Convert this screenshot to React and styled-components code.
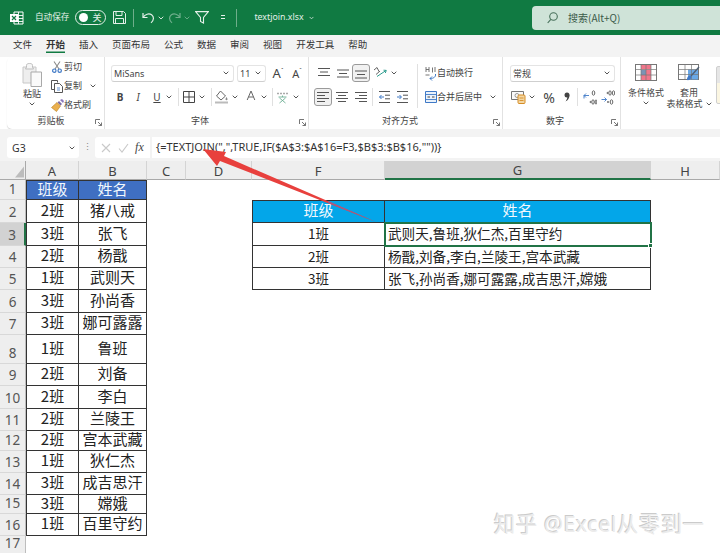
import React from 'react';
import styled, { createGlobalStyle } from 'styled-components';

const CJK = '"Noto Sans CJK SC", "Noto Sans", sans-serif';
const LAT = '"Noto Sans", "Noto Sans CJK SC", sans-serif';

const Global = createGlobalStyle`
  html, body { margin: 0; padding: 0; width: 720px; height: 553px; overflow: hidden; background: #fff; }
  * { box-sizing: border-box; }
`;

const Page = styled.div`
  position: relative; width: 720px; height: 553px; overflow: hidden;
  font-family: ${CJK}; color: #333; background: #fff;
`;

/* ---------- title bar ---------- */
const TitleBar = styled.header`
  height: 35px; background: #107a42; color: #e4f0e9; display: flex; align-items: center; padding-left: 10px;
`;
const TitleItem = styled.div`
  display: flex; align-items: center; flex: none; margin-left: ${p => p.$ml || 0}px;
  font-size: ${p => p.$fs || 9}px; line-height: 12px; white-space: nowrap; opacity: ${p => p.$dim ? .45 : 1};
  padding-bottom: ${p => p.$pb || 0}px;
`;
const FileName = styled(TitleItem)` font-family: ${LAT}; `;
const Toggle = styled.div`
  width: 31px; height: 15px; border: 1px solid #e4f0e9; border-radius: 8px; position: relative;
  display: flex; align-items: center; justify-content: flex-end; padding-right: 4px; font-size: 9px; line-height: 10px;
  &::before { content: ''; position: absolute; left: 3px; top: 2px; width: 9px; height: 9px; border-radius: 50%; background: #fff; }
`;
const TitleDivider = styled.div`
  width: 1px; height: 18px; background: #6fae8b; flex: none; margin-left: ${p => p.$ml}px;
`;
const SearchBox = styled.div`
  margin-left: auto; width: 188px; height: 24px; background: #cfe3d8; border-radius: 4px 0 0 4px;
  display: flex; align-items: center; gap: 10px; padding-left: 15px; font-size: 10px; color: #3b5a49;
`;

/* ---------- tabs ---------- */
const Tabs = styled.nav`
  height: 22px; background: #f3f3f3; display: flex; align-items: flex-start; padding: 2px 0 0 13px; gap: 14px;
`;
const Tab = styled.div`
  font-size: 9.5px; line-height: 14px; height: 16px; white-space: nowrap; color: #333;
  font-weight: ${p => p.$on ? 700 : 400};
  box-shadow: ${p => p.$on ? 'inset 0 -1.5px 0 #107a42' : 'none'};
`;

/* ---------- ribbon ---------- */
const Ribbon = styled.section`
  margin-left: 7px; height: 72px; background: #fff; border-radius: 5px 0 0 5px; display: flex; overflow: hidden;
  box-shadow: 0 1px 1px #d5d5d5;
`;
const Group = styled.div`
  position: relative; flex: none; width: ${p => p.$w}px; display: flex; flex-direction: column;
  box-shadow: ${p => p.$last ? 'none' : 'inset -1px 0 0 #e2e2e2'};
`;
const GroupBody = styled.div`
  height: 57px; display: flex; padding: 7px 0 0 ${p => p.$pl || 0}px;
`;
const GroupLabel = styled.div`
  height: 15px; font-size: 9px; line-height: 13px; text-align: center; color: #444; padding-right: ${p => p.$pr || 0}px;
`;
const Launcher = styled.svg`
  position: absolute; right: 3px; bottom: 3px; width: 7px; height: 7px;
`;
const BigButton = styled.div`
  width: ${p => p.$w}px; flex: none; display: flex; flex-direction: column; align-items: center;
  font-size: 9px; line-height: 11px; color: #444; margin-left: ${p => p.$ml || 0}px; text-align: center; white-space: nowrap;
`;
const BigIcon = styled.div`
  height: ${p => p.$h || 23}px; display: flex; align-items: flex-start; justify-content: center;
  margin-top: ${p => p.$mt || 0}px;
`;
const BigText = styled.div`
  height: 11px; display: flex; align-items: center; gap: 3px;
`;
const CaretLine = styled.div`
  margin-top: ${p => p.$mt || 3}px; line-height: 4px; display: flex;
`;
const Stack = styled.div`
  display: flex; flex-direction: column; gap: ${p => p.$gap ?? 6}px; margin-left: ${p => p.$ml || 0}px; margin-top: ${p => p.$mt || 0}px; flex: none;
`;
const Row = styled.div`
  display: flex; align-items: center; height: ${p => p.$h || 18}px; font-size: 9px; color: #444; white-space: nowrap;
`;
const Slot = styled.div`
  width: ${p => p.$w}px; flex: none; height: ${p => p.$h || 18}px; display: flex; align-items: center; justify-content: center;
  font-family: ${LAT}; font-size: ${p => p.$fs || 10}px; color: #444;
  font-weight: ${p => p.$b ? 700 : 400}; font-style: ${p => p.$i ? 'italic' : 'normal'};
  text-decoration: ${p => p.$u ? 'underline' : 'none'};
  ${p => p.$on ? 'border: 1px solid #9a9a9a; border-radius: 3px; background: #f1f1f1;' : ''}
`;
const Sep = styled.div`
  width: 1px; height: ${p => p.$h || 18}px; background: #e0e0e0; flex: none; margin: 0 ${p => p.$m || 4}px;
`;
const Select = styled.div`
  width: ${p => p.$w}px; height: 17px; flex: none; background: #fff; border: 1px solid #e4e4e4; border-bottom-color: #cfcfcf; border-radius: 3px;
  display: flex; align-items: center; justify-content: space-between; padding: 0 4px 0 2px;
  font-family: ${p => p.$cjk ? CJK : LAT}; font-size: 9px; color: #444; margin-right: ${p => p.$mr || 0}px;
`;
const Label = styled.span`
  margin-left: ${p => p.$ml || 0}px; line-height: 12px; display: inline-flex; align-items: center;
`;
const Sup = styled.sup`
  font-size: 6px; line-height: 6px; margin-bottom: 6px;
`;
const Swatch = styled.div`
  position: absolute; left: 95px; top: 9px; width: 12px; height: 38px; border: 1px solid #cfcfcf; border-radius: 2px;
  background: linear-gradient(#e6e6e6 0 45%, #fbf6e2 45% 100%);
`;

/* ---------- formula bar ---------- */
const FormulaBar = styled.div`
  height: 32px; background: #f3f3f3; padding: 8px 0 3px 7px; display: flex; align-items: stretch; 
`;
const NameBox = styled.div`
  width: 72px; background: #fff; border-radius: 3px; display: flex; align-items: center; justify-content: space-between;
  padding: 0 4px 0 5px; font-family: ${LAT}; font-size: 10.5px; color: #333;
`;
const Dots = styled.div`
  width: 16px; text-align: center; color: #888; font-size: 9px; line-height: 19px;
`;
const FxBox = styled.div`
  width: 55px; background: #fff; border-radius: 3px 0 0 3px; display: flex; align-items: center; justify-content: space-around; padding: 0 3px;
`;
const Fx = styled.span`
  font-family: "Liberation Serif", serif; font-style: italic; font-size: 12px; color: #444;
`;
const FormulaInput = styled.div`
  flex: 1; margin-left: 2px; background: #fff; font-family: ${LAT}; font-size: 11px; line-height: 19px; padding-left: 4px; color: #333; white-space: nowrap; overflow: hidden;
`;

/* ---------- sheet ---------- */
const heights = [20, 23, 23, 22, 22, 23, 22, 29, 22, 23, 22, 20, 22, 22, 19, 22, 18];
const Sheet = styled.div`
  display: grid;
  grid-template-columns: 26px 53px 68px 39px 66px 133px 266px 69px;
  grid-template-rows: 19px ${heights.map(h => `${h}px`).join(' ')};
`;
const ColHead = styled.div`
  background: ${p => p.$sel ? '#d2d2d2' : '#eeeeee'};
  border-bottom: ${p => p.$sel ? '2px solid #217346' : '1px solid #a9a9a9'};
  border-right: 1px solid ${p => p.$sel ? '#d2d2d2' : '#d4d4d4'};
  display: flex; align-items: center; justify-content: center; padding-top: 2px;
  font-family: ${LAT}; font-size: 13px; line-height: 15px; color: #444;
`;
const Corner = styled(ColHead)`
  padding: 5px 1px 1px 15px; align-items: stretch; justify-content: stretch; border-right: 1px solid #a9a9a9;
`;
const CornerMark = styled.svg` width: 10px; height: 12px; `;
const RowHead = styled.div`
  background: ${p => p.$sel ? '#d2d2d2' : '#eeeeee'};
  border-bottom: 1px solid #d8d8d8;
  border-right: ${p => p.$sel ? '2px solid #217346' : '1px solid #bdbdbd'};
  display: flex; align-items: flex-end; justify-content: center; padding-bottom: 1px;
  font-family: ${LAT}; font-size: 13.5px; line-height: 18px; color: #555;
`;
const Blank = styled.div` background: #fff; `;
const Cell = styled.div`
  position: relative; display: flex; align-items: center; min-width: 0; white-space: nowrap; overflow: visible;
  justify-content: ${p => p.$left ? 'flex-start' : 'center'};
  padding-left: ${p => p.$left ? 3 : 0}px;
  padding-bottom: ${p => p.$pb ?? 3}px;
  font-size: ${p => p.$fs || 15}px; line-height: 16px; color: ${p => p.$fill ? '#f2f8fd' : '#222'};
  background: ${p => p.$fill || '#fff'};
  border-right: 1px solid #333; border-bottom: 1px solid #333;
  ${p => p.$first ? 'border-left: 1px solid #333;' : ''}
  ${p => p.$top ? 'border-top: 1px solid #333;' : ''}
  ${p => p.$active ? 'outline: 2px solid #217346; outline-offset: -1px; z-index: 1;' : ''}
`;
const Handle = styled.span`
  position: absolute; right: -3px; bottom: -3px; width: 5px; height: 5px; background: #217346; border: 1px solid #fff;
`;
const ArrowLayer = styled.svg`
  position: absolute; left: 0; top: 0; width: 720px; height: 553px; pointer-events: none; z-index: 3;
`;
const Watermark = styled.div`
  position: absolute; left: 494px; top: 510px; font-family: ${LAT}; font-size: 21.3px; line-height: 28px; color: #ececec; letter-spacing: .6px;
  text-shadow: -1px -1px 0 #cbcbcb; white-space: nowrap; z-index: 3;
`;

/* ---------- icons ---------- */
const Caret = ({ c = '#555', w = 6 }) => (
  <svg width={w} height="4" viewBox="0 0 6 4"><path d="M.7.7 3 3l2.300-2.300" fill="none" stroke={c} strokeWidth="1" /></svg>
);
const LaunchIcon = () => (
  <Launcher viewBox="0 0 7 7"><path d="M.5 5V.5H5M3 3l3.500 3.500M6.500 3.500v3h-3" fill="none" stroke="#666" strokeWidth=".9" /></Launcher>
);
const Lines = ({ rows, w = 14, h = 12, c = '#555' }) => (
  <svg width={w} height={h} viewBox={`0 0 ${w} ${h}`}>
    {rows.map(([x1, x2, y], i) => <path key={i} d={`M${x1} ${y}H${x2}`} stroke={c} strokeWidth="1" />)}
  </svg>
);
const ExcelLogo = () => (
  <svg width="14" height="14" viewBox="0 0 14 14">
    <path d="M4 1h9v12H4z" fill="none" stroke="#fff" /><path d="M8.500 1v12M4 4.500h9M4 7.500h9M4 10.500h9" stroke="#fff" strokeWidth=".9" />
    <rect x="0" y="3" width="8" height="8" fill="#fff" /><path d="M2 5l4 4M6 5 2 9" stroke="#107a42" strokeWidth="1.200" />
  </svg>
);
const SaveIcon = () => (
  <svg width="13" height="13" viewBox="0 0 13 13" fill="none" stroke="#e4f0e9"><path d="M.5.500h10l2 2v10H.5z" /><path d="M3 .5v4h6v-4M2.500 12.500V7.500h8v5" /></svg>
);
const UndoIcon = ({ c = '#e4f0e9' }) => (
  <svg width="13" height="12" viewBox="0 0 13 12" fill="none" stroke={c} strokeWidth="1.200"><path d="M1 1v4.500h4.500" /><path d="M1.200 5.300C3 2.200 7 1 9.600 2.800c2.600 1.900 2.500 5.500-.6 8" /></svg>
);
const RedoIcon = () => (
  <svg width="13" height="12" viewBox="0 0 13 12" fill="none" stroke="#e4f0e9" strokeWidth="1.200"><path d="M12 1v4.500H7.500" /><path d="M11.800 5.300C10 2.200 6 1 3.400 2.800c-2.600 1.900-2.500 5.500.6 8" /></svg>
);
const FilterIcon = () => (
  <svg width="14" height="13" viewBox="0 0 14 13" fill="none" stroke="#e4f0e9" strokeWidth="1.100"><path d="M.6.600h12.800L8.500 6.500v5.500l-3-1.500v-4z" /></svg>
);
const SearchIcon = () => (
  <svg width="11" height="12" viewBox="0 0 11 12" fill="none" stroke="#47705a" strokeWidth="1.100"><circle cx="6.500" cy="4.500" r="3.800" /><path d="M3.800 7.300.7 11" /></svg>
);
const PasteIcon = () => (
  <svg width="20" height="24" viewBox="0 0 20 24" fill="none">
    <path d="M1 4h13v16H1z" fill="#eeeeee" stroke="#c8c8c8" />
    <path d="M4.500 4V2.500C4.500 1 5.500.5 7.500.5s3 .5 3 2V4l1 2h-8z" fill="#f6f6f6" stroke="#bdbdbd" />
    <path d="M9 9h10.500v14.500H9z" fill="#fafafa" stroke="#a9a9a9" />
  </svg>
);
const ScissorsIcon = () => (
  <svg width="10" height="12" viewBox="0 0 10 12" fill="none"><path d="M2 .5 7 8M8 .5 3 8" stroke="#8a8a8a" strokeWidth="1.100" /><circle cx="2.300" cy="9.700" r="1.700" stroke="#3f79c6" strokeWidth="1.200" /><circle cx="7.700" cy="9.700" r="1.700" stroke="#3f79c6" strokeWidth="1.200" /></svg>
);
const CopyIcon = () => (
  <svg width="12" height="13" viewBox="0 0 12 13" fill="none" stroke="#555"><path d="M.5.500h6v2M.5.500v9h2.500" /><path d="M3.500 3.500h5l3 3v6h-8z" /><path d="M6 8h3M6 10h3" stroke="#3f79c6" strokeWidth=".8"/></svg>
);
const BrushIcon = () => (
  <svg width="13" height="13" viewBox="0 0 13 13"><path d="M8 2l3 3-1.500 1.500-3-3z" fill="#7a6aa8" /><path d="M6 3.500 9.500 7 5.500 12.500 0.500 8.500z" fill="#eab04f" stroke="#b9801f" strokeWidth=".6" /><path d="M9 1l2-1 2 2-1 2z" fill="#8c7bbd" /></svg>
);
const BorderIcon = () => (
  <svg width="12" height="12" viewBox="0 0 12 12" fill="none" stroke="#444"><path d="M.5.500h11v11H.5zM6 .5v11M.5 6h11" /></svg>
);
const FillIcon = () => (
  <svg width="14" height="14" viewBox="0 0 14 14" fill="none"><path d="M5.500 1 10.500 6 6 10 1.500 6z" stroke="#666" /><path d="M11.500 7c.8 1.300 1 1.800 1 2.300a1 1 0 0 1-2 0c0-.5.2-1 1-2.300" fill="#888" /><path d="M0 12.500h13" stroke="#bbb" strokeWidth="2" /></svg>
);
const FontColorIcon = () => (
  <svg width="10" height="14" viewBox="0 0 10 14" fill="none"><path d="M1.200 10 5 1l3.800 9M2.500 7h5" stroke="#666" strokeWidth="1" /></svg>
);
const WenIcon = () => (
  <svg width="13" height="13" viewBox="0 0 13 13" fill="none"><path d="M1 2.500h11" stroke="#aaa" strokeWidth="1.500" strokeDasharray="2 1" /><path d="M2.500 6h8M6.500 4.500V6M3.500 7l6 5M9.500 7l-6 5" stroke="#6cae93" strokeWidth=".9" /></svg>
);
const OrientIcon = () => (
  <svg width="15" height="12" viewBox="0 0 15 12" fill="none"><path d="M1 3l3-2.500 2 4M3 7.500 7 4" stroke="#555" strokeWidth=".9" /><path d="M4 9.500 13 3.500M10.500 3.200l2.800.2-1 2.600" stroke="#2f9d8f" strokeWidth="1" /></svg>
);
const IndentIcon = ({ flip }) => (
  <svg width="13" height="12" viewBox="0 0 13 12" fill="none" stroke="#555"><path d="M1 .5h11M1 11.500h11M7 4.200h5M7 7.800h5" />
    <path d={flip ? 'M1 6h4M3.500 4 5.500 6l-2 2' : 'M6 6H1.500M3.500 4l-2 2 2 2'} stroke="#3f79c6" /></svg>
);
const WrapIcon = () => (
  <svg width="13" height="15" viewBox="0 0 13 15" fill="none"><path d="M2 1v5M5 1v5M2 3.500h3" stroke="#666" strokeWidth=".9"/><path d="M8.500 1.500v5M11 1v5" stroke="#666" strokeWidth=".9"/><path d="M11.500 8c.5 3-2 4.500-5.500 4.500M8 10.500l-2 2 2 2" stroke="#3f79c6" strokeWidth="1"/><path d="M1.500 9h4" stroke="#666" strokeWidth=".9"/></svg>
);
const MergeIcon = () => (
  <svg width="12" height="12" viewBox="0 0 12 12" fill="none"><path d="M.5.500h11v11H.5z" fill="#eaf2fb" stroke="#3f79c6" /><path d="M.5 3.500h11M.5 8.500h11" stroke="#3f79c6" strokeWidth=".9"/><path d="M2.500 6h2.500M9.500 6H7" stroke="#444" strokeWidth="1"/></svg>
);
const CurrencyIcon = () => (
  <svg width="15" height="14" viewBox="0 0 15 14" fill="none"><path d="M.5 1.500h12v8H.5z" fill="#fafafa" stroke="#777" /><circle cx="6" cy="5.500" r="2" stroke="#999" /><rect x="7" y="5" width="7" height="8.500" rx="1" fill="#f3d7a5" stroke="#d68d25" /><path d="M8.500 8h4M8.500 10.500h4" stroke="#d68d25" strokeWidth=".9" /></svg>
);
const CommaIcon = () => (
  <svg width="6" height="10" viewBox="0 0 6 10"><circle cx="3" cy="3" r="2.500" fill="#444" /><path d="M5.400 3.200C5.500 6 4 8.500 1.500 9.500 3 7.500 3.400 6 3.300 4.500z" fill="#444" /></svg>
);
const DecIcon = ({ more }) => (
  <svg width="14" height="15" viewBox="0 0 14 15" fill="none" stroke="#555" strokeWidth=".9">
    {more ? <>
      <circle cx="6.500" cy="3" r="0.600" /><ellipse cx="9" cy="3" rx="1.200" ry="2.200" /><ellipse cx="12.500" cy="3" rx="1.200" ry="2.200" />
      <circle cx="7" cy="12" r="0.600" /><ellipse cx="10.500" cy="12" rx="1.300" ry="2.200" />
      <path d="M.5 9.500h5M3.500 7.500l2 2-2 2" stroke="#3f79c6" />
    </> : <>
      <ellipse cx="10.500" cy="3" rx="1.300" ry="2.200" /><circle cx="7.500" cy="12" r="0.600" /><ellipse cx="10" cy="12" rx="1.200" ry="2.200" /><ellipse cx="13" cy="12" rx=".9" ry="2.200" />
      <path d="M6 5.500H1M3 3.500l-2 2 2 2M1 5.500v3" stroke="#3f79c6" />
    </>}
  </svg>
);
const CondIcon = () => (
  <svg width="22" height="17" viewBox="0 0 22 17">
    <rect x=".5" y=".5" width="21" height="16" fill="#fff" stroke="#777" />
    <rect x="6" y="1" width="10" height="4.500" fill="#f0768a" /><rect x="6" y="6" width="5" height="5" fill="#7b93b5" /><rect x="11" y="6" width="5" height="5" fill="#f0768a" /><rect x="6" y="11" width="10" height="5" fill="#f0768a" />
    <path d="M6 .5v16M11 1v15M16 .5v16M.5 5.500h21M.5 11h21" stroke="#777" strokeWidth=".7" fill="none" />
  </svg>
);
const TableStyleIcon = () => (
  <svg width="22" height="18" viewBox="0 0 22 18">
    <rect x=".5" y=".5" width="20" height="15" fill="#fff" stroke="#777" />
    <rect x="10" y="5.500" width="10" height="10" fill="#6aa8e6" />
    <path d="M7 .5v15M13.500.5v15M.5 5.500h20M.5 10.500h20" stroke="#777" strokeWidth=".7" fill="none" />
    <path d="M21 3 13 12" stroke="#4f5f73" strokeWidth="1.300" /><path d="M9 15c0-2 2-4 3.500-3.500 1.500.5 1 3-.5 4-1 .7-2.500.8-3 .5z" fill="#3f79c6" />
  </svg>
);
const CrossIcon = () => (
  <svg width="10" height="10" viewBox="0 0 10 10"><path d="M1 1l8 8M9 1 1 9" stroke="#c9c9c9" strokeWidth="1.100" /></svg>
);
const CheckIcon = () => (
  <svg width="11" height="10" viewBox="0 0 11 10"><path d="M1 5.500 4 9l6-8" fill="none" stroke="#c9c9c9" strokeWidth="1.100" /></svg>
);

/* ---------- data ---------- */
const tabs = ['文件', '开始', '插入', '页面布局', '公式', '数据', '审阅', '视图', '开发工具', '帮助'];
const left = [
  ['班级', '姓名'], ['2班', '猪八戒'], ['3班', '张飞'], ['2班', '杨戬'], ['1班', '武则天'], ['3班', '孙尚香'],
  ['3班', '娜可露露'], ['1班', '鲁班'], ['2班', '刘备'], ['2班', '李白'], ['2班', '兰陵王'], ['2班', '宫本武藏'],
  ['1班', '狄仁杰'], ['3班', '成吉思汗'], ['3班', '嫦娥'], ['1班', '百里守约'],
];
const right = {
  2: ['班级', '姓名'],
  3: ['1班', '武则天,鲁班,狄仁杰,百里守约'],
  4: ['2班', '杨戬,刘备,李白,兰陵王,宫本武藏'],
  5: ['3班', '张飞,孙尚香,娜可露露,成吉思汗,嫦娥'],
};
const cols = ['A', 'B', 'C', 'D', 'F', 'G', 'H'];
const BLUE = '#3f6fc2';
const CYAN = '#03a6e9';

const SheetRow = ({ n }) => {
  const l = left[n - 1];
  const r = right[n];
  const rh = n === 2;
  return (
    <>
      <RowHead $sel={n === 3}>{n}</RowHead>
      {l ? (
        <>
          <Cell $first $top={n === 1} $fill={n === 1 ? BLUE : undefined}>{l[0]}</Cell>
          <Cell $top={n === 1} $fill={n === 1 ? BLUE : undefined}>{l[1]}</Cell>
        </>
      ) : (<><Blank /><Blank /></>)}
      <Blank /><Blank />
      {r ? (
        <>
          <Cell $first $top={rh} $fill={rh ? CYAN : undefined} $fs={rh ? 15 : 13.5} $pb={rh ? 3 : 2}>{r[0]}</Cell>
          <Cell $top={rh} $fill={rh ? CYAN : undefined} $left={!rh} $fs={rh ? 15 : 13.6} $pb={rh ? 3 : 2} $active={n === 3}>
            {r[1]}{n === 3 && <Handle />}
          </Cell>
        </>
      ) : (<><Blank /><Blank /></>)}
      <Blank />
    </>
  );
};

export default function App() {
  return (
    <Page>
      <Global />
      <TitleBar>
        <TitleItem><ExcelLogo /></TitleItem>
        <TitleItem $ml={11} $fs={8.6} $pb={3}>自动保存</TitleItem>
        <TitleItem $ml={6}><Toggle>关</Toggle></TitleItem>
        <TitleItem $ml={7}><SaveIcon /></TitleItem>
        <TitleDivider $ml={7} />
        <TitleItem $ml={8}><UndoIcon /></TitleItem>
        <TitleItem $ml={3}><Caret c="#cfe3d8" /></TitleItem>
        <TitleItem $ml={4} $dim><RedoIcon /></TitleItem>
        <TitleItem $ml={3} $dim><Caret c="#cfe3d8" /></TitleItem>
        <TitleItem $ml={5}><FilterIcon /></TitleItem>
        <TitleItem $ml={11}><Lines rows={[[1, 5, 1.5], [1, 5, 4.5]]} w={6} h={7} c="#e4f0e9" /></TitleItem>
        <TitleDivider $ml={10} />
        <FileName $ml={17} $fs={8.8} $pb={1}>textjoin.xlsx</FileName>
        <TitleItem $ml={5}><Caret c="#cfe3d8" w={5} /></TitleItem>
        <SearchBox><SearchIcon /><span>搜索(Alt+Q)</span></SearchBox>
      </TitleBar>

      <Tabs>{tabs.map(t => <Tab key={t} $on={t === '开始'}>{t}</Tab>)}</Tabs>

      <Ribbon>
        <Group $w={98}>
          <GroupBody $pl={13}>
            <BigButton $w={24}>
              <BigIcon $h={25} $mt={-1}><PasteIcon /></BigIcon>
              <BigText>粘贴</BigText>
              <CaretLine><Caret /></CaretLine>
            </BigButton>
            <Stack $ml={6} $gap={1} $mt={-6}>
              <Row><Slot $w={14}><ScissorsIcon /></Slot><Label>剪切</Label></Row>
              <Row><Slot $w={14}><CopyIcon /></Slot><Label>复制</Label><Label $ml={8}><Caret /></Label></Row>
              <Row><Slot $w={14}><BrushIcon /></Slot><Label>格式刷</Label></Row>
            </Stack>
          </GroupBody>
          <GroupLabel $pr={10}>剪贴板</GroupLabel>
          <LaunchIcon />
        </Group>

        <Group $w={204}>
          <GroupBody $pl={6}>
            <Stack>
              <Row>
                <Select $w={123} $mr={3}>MiSans<Caret /></Select>
                <Select $w={29} $mr={4}>11<Caret /></Select>
                <Slot $w={16} $fs={13}>A<Sup>ˆ</Sup></Slot>
                <Slot $w={4} />
                <Slot $w={14} $fs={11}>A<Sup>ˇ</Sup></Slot>
              </Row>
              <Row>
                <Slot $w={4} />
                <Slot $w={10} $b>B</Slot>
                <Slot $w={8} />
                <Slot $w={10} $i>I</Slot>
                <Slot $w={9} />
                <Slot $w={10} $u>U</Slot>
                <Slot $w={13}><Caret /></Slot>
                <Sep $m={3} />
                <Slot $w={14}><BorderIcon /></Slot>
                <Slot $w={12}><Caret /></Slot>
                <Sep $m={3} />
                <Slot $w={14}><FillIcon /></Slot>
                <Slot $w={12}><Caret /></Slot>
                <Slot $w={3} />
                <Slot $w={14}><FontColorIcon /></Slot>
                <Slot $w={12}><Caret /></Slot>
                <Sep $m={2} />
                <Slot $w={15}><WenIcon /></Slot>
                <Slot $w={11}><Caret /></Slot>
              </Row>
            </Stack>
          </GroupBody>
          <GroupLabel $pr={14}>字体</GroupLabel>
          <LaunchIcon />
        </Group>

        <Group $w={194}>
          <GroupBody $pl={5}>
            <Stack>
              <Row>
                <Slot $w={19}><Lines rows={[[1, 13, 1.5], [3, 11, 5], [1, 13, 8.5]]} /></Slot>
                <Slot $w={19}><Lines rows={[[1, 13, 3], [3, 11, 6.5], [1, 13, 10]]} /></Slot>
                <Slot $w={18} $on><Lines rows={[[1, 13, 4], [3, 11, 7.5], [1, 13, 11]]} /></Slot>
                <Slot $w={20}><OrientIcon /></Slot>
                <Slot $w={8}><Caret /></Slot>
              </Row>
              <Row>
                <Slot $w={18} $on><Lines rows={[[1, 13, 1.5], [1, 9, 4.5], [1, 13, 7.5], [1, 9, 10.5]]} /></Slot>
                <Slot $w={19}><Lines rows={[[1, 13, 1.5], [3, 11, 4.5], [1, 13, 7.5], [3, 11, 10.5]]} /></Slot>
                <Slot $w={19}><Lines rows={[[1, 13, 1.5], [5, 13, 4.5], [1, 13, 7.5], [5, 13, 10.5]]} /></Slot>
                <Sep $m={2} />
                <Slot $w={18}><IndentIcon /></Slot>
                <Slot $w={19}><IndentIcon flip /></Slot>
              </Row>
            </Stack>
            <Sep $m={5} $h={44} />
            <Stack $ml={1}>
              <Row><Slot $w={13}><WrapIcon /></Slot><Label>自动换行</Label></Row>
              <Row><Slot $w={13}><MergeIcon /></Slot><Label>合并后居中</Label><Label $ml={8}><Caret /></Label></Row>
            </Stack>
          </GroupBody>
          <GroupLabel $pr={12}>对齐方式</GroupLabel>
          <LaunchIcon />
        </Group>

        <Group $w={118}>
          <GroupBody $pl={7}>
            <Stack>
              <Row>
                <Select $w={105} $cjk>常规<Caret /></Select>
              </Row>
              <Row>
                <Slot $w={16}><CurrencyIcon /></Slot>
                <Slot $w={11}><Caret /></Slot>
                <Slot $w={24} $fs={14}>%</Slot>
                <Slot $w={12}><CommaIcon /></Slot>
                <Sep $m={4} />
                <Slot $w={15}><DecIcon /></Slot>
                <Slot $w={4} />
                <Slot $w={14}><DecIcon more /></Slot>
              </Row>
            </Stack>
          </GroupBody>
          <GroupLabel $pr={14}>数字</GroupLabel>
          <LaunchIcon />
        </Group>

        <Group $w={99} $last>
          <GroupBody $pl={5}>
            <BigButton $w={40}>
              <BigIcon><CondIcon /></BigIcon>
              <BigText>条件格式</BigText>
              <CaretLine><Caret /></CaretLine>
            </BigButton>
            <BigButton $w={42} $ml={2}>
              <BigIcon><TableStyleIcon /></BigIcon>
              <BigText>套用</BigText>
              <BigText>表格格式<Caret /></BigText>
            </BigButton>
          </GroupBody>
          <Swatch />
        </Group>
      </Ribbon>

      <FormulaBar>
        <NameBox>G3<Caret /></NameBox>
        <Dots>⋮</Dots>
        <FxBox><CrossIcon /><CheckIcon /><Fx>fx</Fx></FxBox>
        <FormulaInput>{'{=TEXTJOIN(",",TRUE,IF($A$3:$A$16=F3,$B$3:$B$16,""))}'}</FormulaInput>
      </FormulaBar>

      <Sheet>
        <Corner><CornerMark viewBox="0 0 10 12"><path d="M10 0v12H0z" fill="#bcbcbc" /></CornerMark></Corner>
        {cols.map(c => <ColHead key={c} $sel={c === 'G'}>{c}</ColHead>)}
        {heights.map((_, i) => <SheetRow key={i} n={i + 1} />)}
      </Sheet>

      <ArrowLayer viewBox="0 0 720 553">
        <polygon points="203,149 226,152 224,156 376,222 220,161 217,166" fill="#e8403d" />
        <polygon points="328,201 376,222 328,203" fill="#a85a85" />
      </ArrowLayer>
      <Watermark>知乎 @Excel从零到一</Watermark>
    </Page>
  );
}
